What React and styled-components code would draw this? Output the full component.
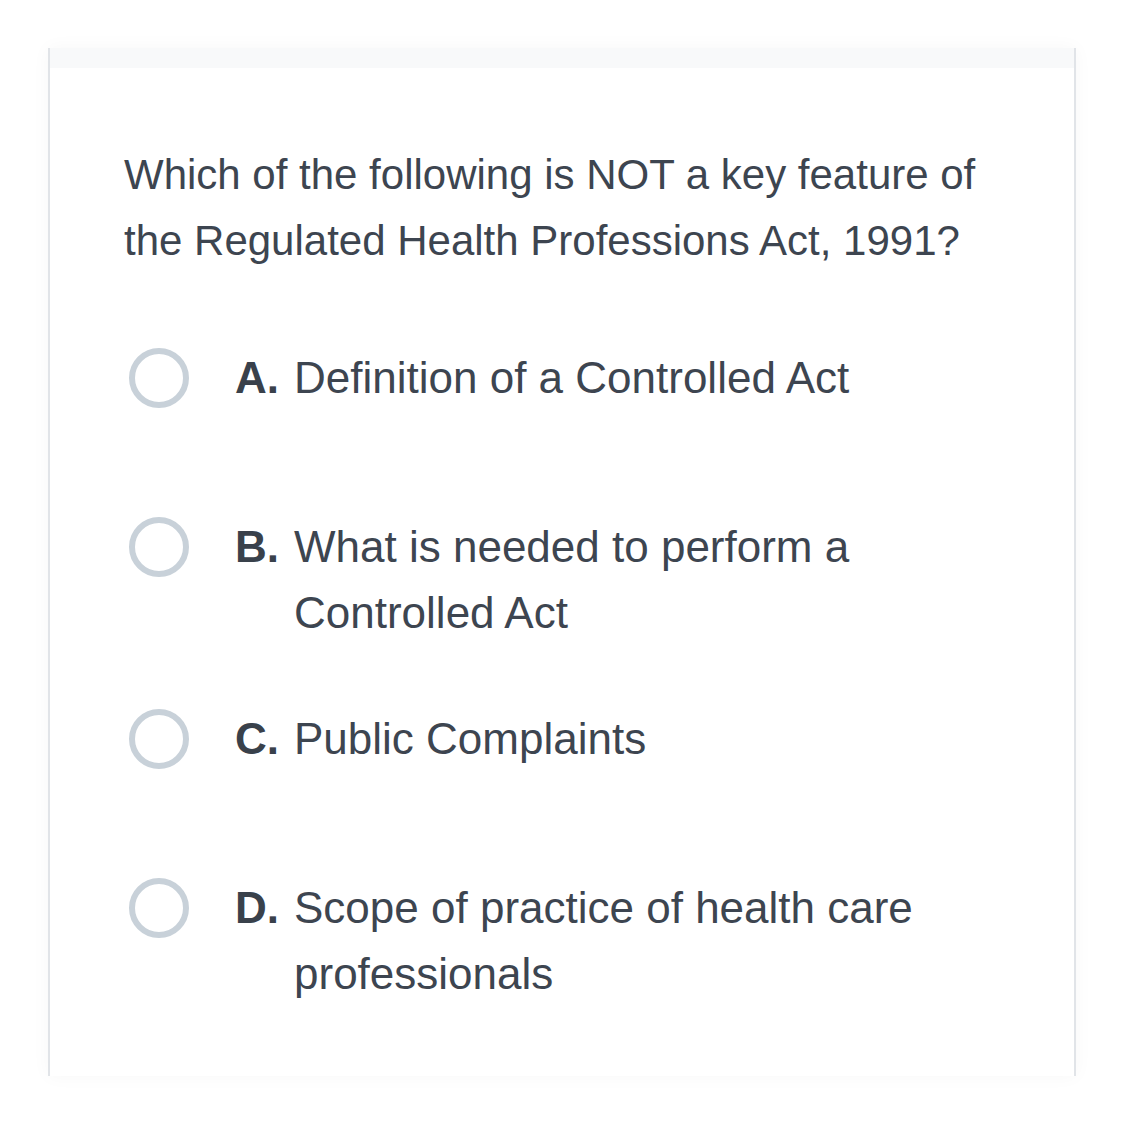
import React, { useState } from 'react'
import styled, { createGlobalStyle } from 'styled-components'

const GlobalStyle = createGlobalStyle`
    html, body {
        margin: 0;
        padding: 0;
        background: #fff;
    }
    body {
        font-family: 'Liberation Sans', Arial, Helvetica, sans-serif;
        color: #3d4550;
    }
`

const Page = styled.div`
    padding: 48px 49px 0 48px;
    height: 1125px;
    box-sizing: border-box;
`

const Card = styled.div`
    height: 1028px;
    box-sizing: border-box;
    background: #fff;
    border-left: 2px solid #e1e4e8;
    border-right: 2px solid #e1e4e8;
    box-shadow: 0 0 18px rgba(0, 0, 0, 0.035);
    display: flex;
    flex-direction: column;
`

const TopBand = styled.div`
    height: 20px;
    background: #f8f9fa;
`

const Body = styled.div`
    padding: 74px 74px 0 74px;
`

const Question = styled.p`
    margin: 0;
    font-size: 42px;
    line-height: 66px;
    color: #3d4550;
`

const Options = styled.ul`
    list-style: none;
    margin: 41px 0 0 0;
    padding: 0 0 0 5px;
`

const Option = styled.li`
    display: flex;
    align-items: flex-start;
    min-height: 169px;
    padding: 30px 0;
    box-sizing: border-box;
    cursor: pointer;
`

const Radio = styled.span`
    flex: none;
    width: 60px;
    height: 60px;
    margin-top: 3px;
    margin-right: 46px;
    box-sizing: border-box;
    border-radius: 50%;
    border: 6px solid ${({ checked }) => (checked ? '#4a90d9' : '#c8d1d9')};
    background: ${({ checked }) => (checked ? '#4a90d9' : '#fff')};
`

const Letter = styled.span`
    flex: none;
    font-size: 44px;
    line-height: 66px;
    font-weight: 700;
    margin-right: 15px;
    color: #39414b;
`

const OptionText = styled.span`
    font-size: 44px;
    line-height: 66px;
    color: #3d4550;
`

const answers = [
    { key: 'A', text: 'Definition of a Controlled Act' },
    { key: 'B', text: 'What is needed to perform a Controlled Act' },
    { key: 'C', text: 'Public Complaints' },
    { key: 'D', text: 'Scope of practice of health care professionals' },
]

export default function App() {

    const [selected, setSelected] = useState(null)

    return (
        <>
            <GlobalStyle />
            <Page>
                <Card>
                    <TopBand />
                    <Body>
                        <Question>
                            Which of the following is NOT a key feature of the Regulated Health Professions Act, 1991?
                        </Question>
                        <Options>
                            {answers.map(a => (
                                <Option key={a.key} onClick={() => setSelected(a.key)}>
                                    <Radio checked={selected === a.key} />
                                    <Letter>{a.key}.</Letter>
                                    <OptionText>{a.text}</OptionText>
                                </Option>
                            ))}
                        </Options>
                    </Body>
                </Card>
            </Page>
        </>
    )
}
